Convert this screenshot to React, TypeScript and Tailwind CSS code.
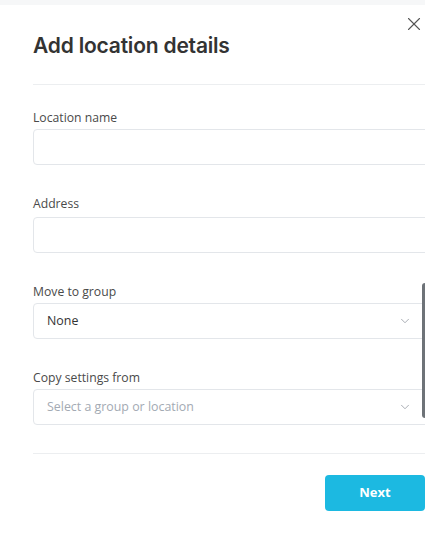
import { ChevronDown, X } from "lucide-react";

const labelClass = "block text-[12.2px] leading-[18px] text-[#4a4a4a]";
const boxClass =
  "flex h-9 w-[400px] items-center rounded-[4px] border border-[#e3e6ea] bg-white px-[13px] text-[12.4px] text-[#333]";

function Field({ label, spacing = "mt-[2px]", children }: { label: string; spacing?: string; children?: React.ReactNode }) {
  return (
    <div>
      <label className={labelClass}>{label}</label>
      <div className={spacing}>{children}</div>
    </div>
  );
}

function SelectBox({ value, placeholder }: { value?: string; placeholder?: string }) {
  return (
    <div className={`${boxClass} justify-between`}>
      <span className={value ? "text-[#333]" : "text-[#a3aab3]"}>{value ?? placeholder}</span>
      <ChevronDown className="mr-[7px] size-[14px] text-[#8a9099]" strokeWidth={1.25} />
    </div>
  );
}

export default function App() {
  return (
    <div className="relative h-[557px] w-[425px] overflow-hidden bg-white font-['Open_Sans','Noto_Sans',sans-serif]">
      <div className="h-[5px] bg-[#f6f7f8]" />

      <button className="absolute left-[403px] top-[13px] text-[#555]" type="button">
        <X className="size-[22px]" strokeWidth={1.2} />
      </button>

      <div className="pl-[33px]">
        <h1 className="pt-[28px] font-['Inter',sans-serif] text-[21px] font-semibold leading-[26px] tracking-[-0.2px] text-[#333]">
          Add location details
        </h1>

        <div className="mt-[25px] h-px bg-[#eceef0]" />

        <div className="mt-[24px] flex flex-col gap-[30px]">
          <Field label="Location name">
            <div className={boxClass} />
          </Field>
          <Field label="Address" spacing="mt-[4px]">
            <div className={boxClass} />
          </Field>
          <Field label="Move to group">
            <SelectBox value="None" />
          </Field>
          <Field label="Copy settings from">
            <SelectBox placeholder="Select a group or location" />
          </Field>
        </div>

        <div className="mt-[28px] h-px bg-[#eceef0]" />

        <div className="mt-[21px] flex justify-end">
          <button
            className="h-9 w-[100px] rounded-[4px] bg-[#1cb9e1] text-[13px] font-bold text-white"
            type="button"
          >
            Next
          </button>
        </div>
      </div>

      <div className="absolute right-0 top-[283px] h-[135px] w-[3px] rounded-l-full bg-[#6e7378]" />
    </div>
  );
}
